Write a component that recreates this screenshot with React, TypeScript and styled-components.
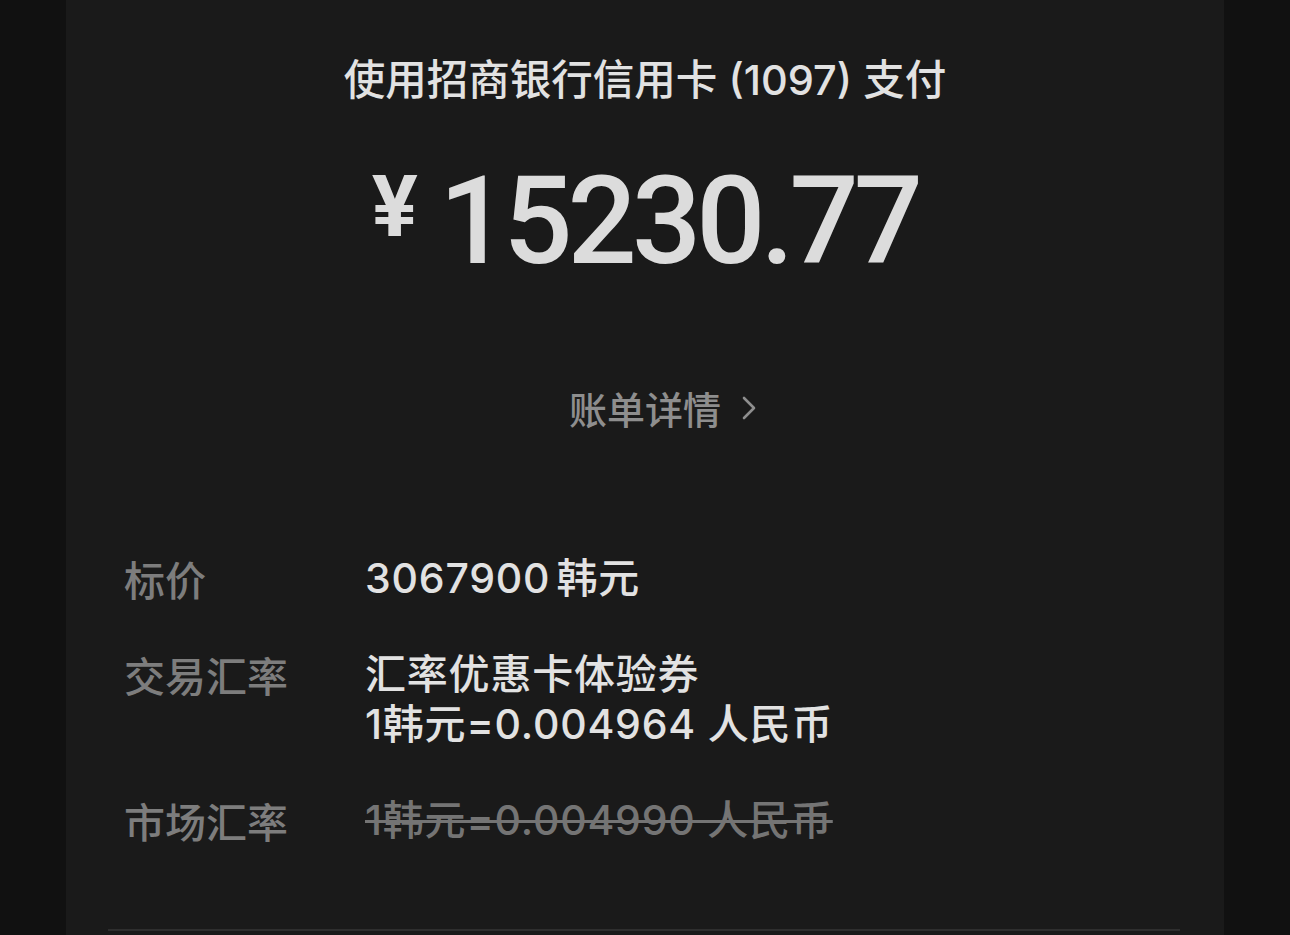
import React from "react";
import styled, { createGlobalStyle } from "styled-components";

const Global = createGlobalStyle`
  html, body { margin: 0; padding: 0; background: #111111; }
  body { font-family: "Inter", "Noto Sans CJK SC", sans-serif; }
`;

const Page = styled.div`
  width: 1290px;
  height: 935px;
  display: flex;
  justify-content: center;
  background: #111111;
  overflow: hidden;
`;

const Panel = styled.main`
  width: 1158px;
  height: 935px;
  background: #1a1a1a;
  display: flex;
  flex-direction: column;
  align-items: center;
  padding-top: 55px;
  box-sizing: border-box;
`;

const Title = styled.h1`
  margin: 0;
  font-family: "Inter", "Noto Sans CJK SC", sans-serif;
  font-size: 41.5px;
  line-height: 50px;
  font-weight: 500;
  color: #e2e2e2;
  white-space: nowrap;
`;

const AmountRow = styled.div`
  margin-top: 57px;
  display: flex;
  align-items: flex-start;
  gap: 21px;
  color: #dcdcdc;
  font-family: "Roboto", sans-serif;
  font-weight: 500;
`;

const Currency = styled.span`
  font-size: 86px;
  line-height: 86px;
  margin-top: 2px;
  font-weight: 700;
`;

const Amount = styled.span`
  font-size: 122px;
  line-height: 120px;
  letter-spacing: -5px;
`;

const DetailLink = styled.div`
  margin-top: 103px;
  padding-left: 36px;
  display: flex;
  align-items: center;
  gap: 20px;
  font-family: "Noto Sans CJK SC", sans-serif;
  font-size: 38px;
  line-height: 46px;
  font-weight: 500;
  color: #8e8e8e;
`;

const Info = styled.dl`
  align-self: stretch;
  margin: 122px 0 0;
  padding-left: 58px;
  display: grid;
  grid-template-columns: 241px 1fr;
  row-gap: 46px;
  font-size: 41px;
  line-height: 50px;
  font-weight: 500;
`;

const Label = styled.dt`
  margin: 0;
  color: #7d7d7d;
  font-family: "Noto Sans CJK SC", sans-serif;
`;

const Value = styled.dd<{ $struck?: boolean }>`
  margin: 0;
  color: ${(p) => (p.$struck ? "#747474" : "#e2e2e2")};
  font-family: "Inter", "Noto Sans CJK SC", sans-serif;
  letter-spacing: 0.8px;
  text-decoration: ${(p) => (p.$struck ? "line-through" : "none")};
  text-decoration-thickness: 3px;
  text-decoration-color: #747474;
`;

const Unit = styled.span`
  margin-left: 6px;
`;

const Divider = styled.hr`
  align-self: stretch;
  margin: 84px 44px 0 42px;
  border: none;
  height: 2px;
  background: #2e2e2e;
`;

const Chevron = () => (
  <svg width="16" height="26" viewBox="0 0 16 26" fill="none">
    <polyline points="3,3 13,13 3,23" stroke="#8e8e8e" strokeWidth="2.6" strokeLinecap="round" strokeLinejoin="round" />
  </svg>
);

export default function App() {
  return (
    <>
      <Global />
      <Page>
        <Panel>
          <Title>使用招商银行信用卡 (1097) 支付</Title>
          <AmountRow>
            <Currency>¥</Currency>
            <Amount>15230.77</Amount>
          </AmountRow>
          <DetailLink>
            账单详情
            <Chevron />
          </DetailLink>
          <Info>
            <Label>标价</Label>
            <Value>
              3067900<Unit>韩元</Unit>
            </Value>
            <Label>交易汇率</Label>
            <Value>
              汇率优惠卡体验券
              <br />
              1韩元=0.004964 人民币
            </Value>
            <Label>市场汇率</Label>
            <Value $struck>1韩元=0.004990 人民币</Value>
          </Info>
          <Divider />
        </Panel>
      </Page>
    </>
  );
}
